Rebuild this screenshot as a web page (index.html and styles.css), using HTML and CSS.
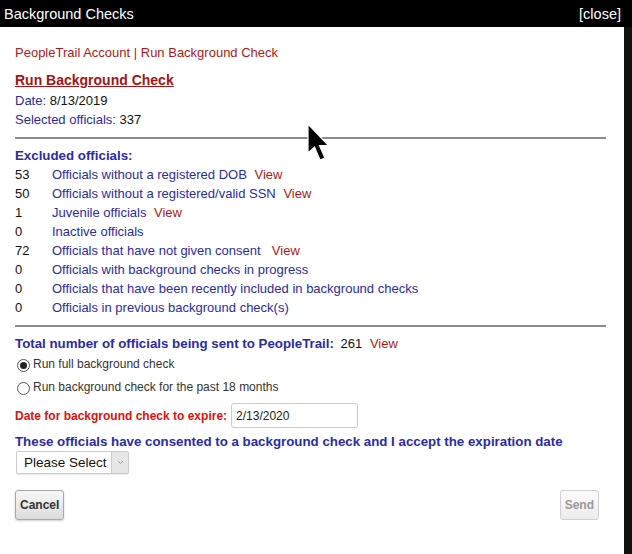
FILE: index.html
```html
<!DOCTYPE html>
<html lang="en">
<head>
    <meta charset="UTF-8">
    <title>Background Checks</title>
    <link rel="stylesheet" href="styles.css">
</head>
<body>
    <div class="modal">
        <div class="modal-title">
            <span>Background Checks</span>
            <a href="#" class="close">[close]</a>
        </div>

        <div class="modal-body">
            <div class="crumbs">
                <a href="#">PeopleTrail Account</a> | <a href="#">Run Background Check</a>
            </div>

            <h2 class="page-title">Run Background Check</h2>
            <div class="info"><span class="label">Date:</span> 8/13/2019</div>
            <div class="info"><span class="label">Selected officials:</span> 337</div>

            <hr>

            <div class="section-title">Excluded officials:</div>
            <table class="excluded">
                <tr><td class="count">53</td><td><span class="label">Officials without a registered DOB</span> <a href="#" class="view">View</a></td></tr>
                <tr><td class="count">50</td><td><span class="label">Officials without a registered/valid SSN</span> <a href="#" class="view">View</a></td></tr>
                <tr><td class="count">1</td><td><span class="label">Juvenile officials</span> <a href="#" class="view">View</a></td></tr>
                <tr><td class="count">0</td><td><span class="label">Inactive officials</span></td></tr>
                <tr><td class="count">72</td><td><span class="label">Officials that have not given consent</span> &nbsp;<a href="#" class="view">View</a></td></tr>
                <tr><td class="count">0</td><td><span class="label">Officials with background checks in progress</span></td></tr>
                <tr><td class="count">0</td><td><span class="label">Officials that have been recently included in background checks</span></td></tr>
                <tr><td class="count">0</td><td><span class="label">Officials in previous background check(s)</span></td></tr>
            </table>

            <hr>

            <div class="total">
                <span class="section-title">Total number of officials being sent to PeopleTrail:</span>
                <span class="value">261</span> <a href="#" class="view">View</a>
            </div>

            <div class="radios">
                <label class="radio"><input type="radio" name="type" checked> Run full background check</label>
                <label class="radio"><input type="radio" name="type"> Run background check for the past 18 months</label>
            </div>

            <div class="expire">
                <label for="expire-date">Date for background check to expire:</label>
                <input type="text" id="expire-date" value="2/13/2020">
            </div>

            <div class="section-title consent">These officials have consented to a background check and I accept the expiration date</div>
            <div class="select-wrap">
                <span class="select-text">Please Select</span>
                <span class="select-arrow">
                    <svg width="7" height="5" viewBox="0 0 7 5"><path d="M1 1 L3.5 3.5 L6 1" fill="none" stroke="#999" stroke-width="1"/></svg>
                </span>
            </div>

            <div class="actions">
                <button type="button" class="btn">Cancel</button>
                <button type="button" class="btn" disabled>Send</button>
            </div>
        </div>
    </div>

    <!-- cursor do mouse -->
    <svg class="cursor" width="26" height="42" viewBox="0 0 26 42">
        <path d="M2 1 L2 30 L8.5 24 L14 37 L19 35 L13.5 22.5 L22.5 22.5 Z" fill="#000" stroke="#fff" stroke-width="1.2"/>
    </svg>
</body>
</html>
```

FILE: styles.css
```css
:root {
    --blue: #2b2ba6;
    --red: #b01818;
    --bright-red: #e01010;
    --rule: #8a8a8a;
}

* {
    box-sizing: border-box;
}

body {
    margin: 0;
    background-color: #111;
    font-family: 'Liberation Sans', Arial, sans-serif;
    font-size: 13px;
    color: #111;
    overflow: hidden;
}

.modal {
    width: 632px;
    height: 554px;
    display: flex;
    flex-direction: column;
}

.modal-title {
    height: 27px;
    background-color: #000;
    color: #fff;
    display: flex;
    justify-content: space-between;
    align-items: center;
    padding: 0 11px 0 4px;
    font-size: 14.5px;
}

.modal-title .close {
    color: #fff;
    text-decoration: none;
}

.modal-body {
    width: 624px;
    flex: 1;
    background-color: #fff;
    padding: 18px 18px 0 15px;
    position: relative;
}

a {
    color: var(--red);
    text-decoration: none;
}

.crumbs {
    color: var(--red);
    line-height: 16px;
}

.page-title {
    margin: 11px 0 2px;
    font-size: 14px;
    line-height: 17px;
    color: #a51414;
    text-decoration: underline;
}

.info {
    line-height: 19px;
}

.label {
    color: var(--blue);
}

hr {
    border: none;
    border-top: 2px solid var(--rule);
    margin: 8px 0 7px;
}

.section-title {
    color: var(--blue);
    font-weight: bold;
    font-size: 13.3px;
    line-height: 19px;
}

.excluded {
    border-collapse: collapse;
}

.excluded td {
    padding: 0;
    height: 19px;
    line-height: 19px;
}

.excluded .count {
    width: 37px;
}

.view {
    margin-left: 4px;
}

.total {
    line-height: 18px;
}

.total .value {
    margin-left: 3px;
}

.radios {
    margin-top: -1px;
}

.radio {
    display: flex;
    align-items: center;
    font-size: 12px;
    color: #333;
    height: 23px;
    line-height: 16px;
}

.radio input {
    -webkit-appearance: none;
    appearance: none;
    margin: 4px 3px 0 2px;
    width: 13px;
    height: 13px;
    border: 1px solid #555;
    border-radius: 50%;
    background-color: #fff;
    display: grid;
    place-content: center;
}

.radio input:checked::before {
    content: "";
    width: 7px;
    height: 7px;
    border-radius: 50%;
    background-color: #222;
}

.expire {
    display: flex;
    align-items: center;
    margin-top: 5px;
}

.expire label {
    color: var(--bright-red);
    font-weight: bold;
    font-size: 12px;
    margin-right: 4px;
}

.expire input {
    width: 127px;
    height: 25px;
    border: 1px solid #ccc;
    border-radius: 3px;
    font-family: inherit;
    font-size: 12px;
    padding: 2px 4px;
    color: #222;
}

.consent {
    margin-top: 4px;
}

.select-wrap {
    display: flex;
    width: 113px;
    height: 23px;
    margin: 0 0 0 1px;
    border: 1px solid #ccc;
    border-radius: 2px;
    box-shadow: 0 1px 1px rgba(0, 0, 0, 0.08);
}

.select-text {
    flex: 1;
    font-size: 13.5px;
    line-height: 21px;
    padding-left: 7px;
    color: #111;
}

.select-arrow {
    width: 17px;
    background-color: #e6e6e6;
    border-left: 1px solid #ccc;
    display: flex;
    align-items: center;
    justify-content: center;
}

.actions {
    display: flex;
    justify-content: space-between;
    margin-top: 16px;
    padding-right: 7px;
}

.btn {
    height: 30px;
    padding: 0 4px;
    font-family: inherit;
    font-size: 12px;
    font-weight: bold;
    color: #333;
    background: linear-gradient(#f7f7f7, #dcdcdc);
    border: 1px solid #a8a8a8;
    border-radius: 3px;
    box-shadow: 0 1px 2px rgba(0, 0, 0, 0.2);
}

.btn:disabled {
    color: #999;
    background: linear-gradient(#fbfbfb, #ececec);
    border-color: #cfcfcf;
    box-shadow: none;
}

/* cursor sobre a tela */
.cursor {
    position: absolute;
    left: 306px;
    top: 123px;
}
```
